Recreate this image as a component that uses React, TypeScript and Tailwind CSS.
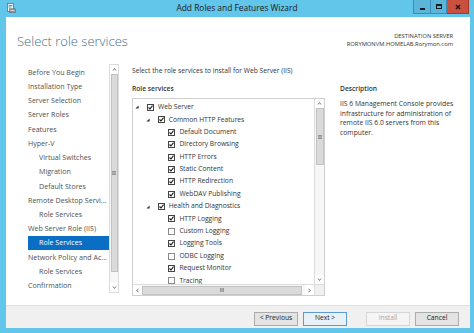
import React from "react";

type Row = { l: number; t: string; c: boolean; e?: boolean };

const tree: Row[] = [
  { l: 0, t: "Web Server", c: true, e: true },
  { l: 1, t: "Common HTTP Features", c: true, e: true },
  { l: 2, t: "Default Document", c: true },
  { l: 2, t: "Directory Browsing", c: true },
  { l: 2, t: "HTTP Errors", c: true },
  { l: 2, t: "Static Content", c: true },
  { l: 2, t: "HTTP Redirection", c: true },
  { l: 2, t: "WebDAV Publishing", c: true },
  { l: 1, t: "Health and Diagnostics", c: true, e: true },
  { l: 2, t: "HTTP Logging", c: true },
  { l: 2, t: "Custom Logging", c: false },
  { l: 2, t: "Logging Tools", c: true },
  { l: 2, t: "ODBC Logging", c: false },
  { l: 2, t: "Request Monitor", c: true },
  { l: 2, t: "Tracing", c: false },
];

const nav: { t: string; l: number; a?: boolean }[] = [
  { t: "Before You Begin", l: 0 },
  { t: "Installation Type", l: 0 },
  { t: "Server Selection", l: 0 },
  { t: "Server Roles", l: 0 },
  { t: "Features", l: 0 },
  { t: "Hyper-V", l: 0 },
  { t: "Virtual Switches", l: 1 },
  { t: "Migration", l: 1 },
  { t: "Default Stores", l: 1 },
  { t: "Remote Desktop Servi...", l: 0 },
  { t: "Role Services", l: 1 },
  { t: "Web Server Role (IIS)", l: 0 },
  { t: "Role Services", l: 1, a: true },
  { t: "Network Policy and Ac...", l: 0 },
  { t: "Role Services", l: 1 },
  { t: "Confirmation", l: 0 },
];

function Check({ checked }: { checked: boolean }) {
  return (
    <span
      className={`w-[7px] h-[7px] shrink-0 border bg-white flex items-center justify-center ${
        checked ? "border-[#444]" : "border-[#8a8a8a]"
      }`}
    >
      {checked && (
        <svg width="5" height="5" viewBox="0 0 5 5">
          <path d="M0.5 2.5 L2 4 L4.5 0.7" fill="none" stroke="#1a1a1a" strokeWidth="1.1" />
        </svg>
      )}
    </span>
  );
}

function Chevron({ dir }: { dir: "up" | "down" | "left" | "right" }) {
  const d =
    dir === "up"
      ? "M1 3.5 L2.5 1.5 L4 3.5"
      : dir === "down"
      ? "M1 1.5 L2.5 3.5 L4 1.5"
      : dir === "left"
      ? "M3.5 1 L1.5 2.5 L3.5 4"
      : "M1.5 1 L3.5 2.5 L1.5 4";
  return (
    <svg width="5" height="5" viewBox="0 0 5 5">
      <path d={d} fill="none" stroke="#707070" strokeWidth="0.9" />
    </svg>
  );
}

function Grip({ horizontal }: { horizontal?: boolean }) {
  return (
    <svg width="4" height="4" viewBox="0 0 4 4">
      {horizontal ? (
        <>
          <rect x="0.3" y="0" width="0.8" height="4" fill="#7a7a7a" />
          <rect x="1.6" y="0" width="0.8" height="4" fill="#7a7a7a" />
          <rect x="2.9" y="0" width="0.8" height="4" fill="#7a7a7a" />
        </>
      ) : (
        <>
          <rect x="0" y="0.3" width="4" height="0.8" fill="#7a7a7a" />
          <rect x="0" y="1.6" width="4" height="0.8" fill="#7a7a7a" />
          <rect x="0" y="2.9" width="4" height="0.8" fill="#7a7a7a" />
        </>
      )}
    </svg>
  );
}

function Btn({ label, kind }: { label: string; kind?: "default" | "disabled" }) {
  const cls =
    kind === "default"
      ? "border-[#5b9bd5] bg-[#e8f0f8] text-[#222]"
      : kind === "disabled"
      ? "border-[#d6d6d6] bg-[#f4f4f4] text-[#a6a6a6]"
      : "border-[#acacac] bg-[#e3e3e3] text-[#222]";
  return (
    <div className={`w-[44px] h-[13.5px] border flex items-center justify-center text-[6.7px] leading-none ${cls}`}>
      {label}
    </div>
  );
}

export default function App() {
  return (
    <div className="w-[474px] h-[333px] bg-[#62c5ea] flex flex-col overflow-hidden font-['Open_Sans',sans-serif] text-[#333]">
      {/* Title bar */}
      <div className="h-[17px] shrink-0 flex items-start">
        <div className="w-[61px] pl-[7px] pt-[3px]">
          <svg width="9" height="10" viewBox="0 0 9 10">
            <rect x="0.5" y="0.5" width="6" height="8" fill="#f4f8fb" stroke="#3a7fb0" strokeWidth="0.8" />
            <rect x="1.5" y="2" width="4" height="0.8" fill="#3a7fb0" />
            <rect x="1.5" y="3.6" width="3" height="0.8" fill="#3a7fb0" />
            <rect x="2.5" y="5.8" width="6" height="3.7" fill="#8e9aa3" stroke="#5c6770" strokeWidth="0.6" />
            <rect x="3.5" y="7" width="4" height="0.8" fill="#d9dee2" />
          </svg>
        </div>
        <div className="flex-1 h-[17px] flex items-center justify-center text-[8.4px] text-[#1a1a1a]">
          Add Roles and Features Wizard
        </div>
        <div className="w-[61px] flex justify-end pr-[5px]">
          <div className="w-[18px] h-[14px] bg-[#59b6da] border border-t-0 border-[#3c8db5] flex items-end justify-center pb-[3px]">
            <div className="w-[5px] h-[2px] bg-[#1a1a1a]" />
          </div>
          <div className="w-[16px] h-[14px] bg-[#59b6da] border border-t-0 border-l-0 border-[#3c8db5] flex items-center justify-center">
            <div className="w-[6px] h-[5px] border border-t-2 border-[#1a1a1a]" />
          </div>
          <div className="w-[22px] h-[14px] bg-[#c9503f] border border-t-0 border-l-0 border-[#a23a2c] flex items-center justify-center">
            <svg width="6" height="6" viewBox="0 0 6 6">
              <path d="M1 1 L5 5 M5 1 L1 5" stroke="#2a1010" strokeWidth="1.4" />
            </svg>
          </div>
        </div>
      </div>

      {/* Client */}
      <div className="flex-1 ml-[6px] mr-[4px] mb-[5px] bg-white flex flex-col">
        {/* Header */}
        <div className="h-[45px] shrink-0 flex justify-between">
          <div className="pl-[11px] pt-[16px] text-[13px] leading-[16px] font-light text-[#4a6e86]">
            Select role services
          </div>
          <div className="pr-[17px] pt-[15px] text-[5.8px] leading-[8px] text-[#333] text-right">
            <div>DESTINATION SERVER</div>
            <div>RORYMONVM.HOMELAB.Rorymon.com</div>
          </div>
        </div>

        {/* Body */}
        <div className="h-[243px] shrink-0 flex">
          {/* Nav */}
          <div className="pl-[22px] pt-[2px] flex items-start">
            <div className="w-[81px] pt-[1.2px]">
              {nav.map((n, i) => (
                <div
                  key={i}
                  className={`h-[14.23px] flex items-center text-[7.1px] leading-none whitespace-nowrap ${
                    n.a ? "bg-[#0a6ec4] text-white" : "text-[#505050]"
                  } ${n.l === 1 ? "pl-[11px]" : "pl-0"}`}
                >
                  {n.t}
                </div>
              ))}
            </div>
            <div className="w-[10px] h-[229px] border border-[#dcdcdc] bg-[#f7f7f7] flex flex-col">
              <div className="h-[9px] shrink-0 bg-white flex items-center justify-center">
                <Chevron dir="up" />
              </div>
              <div className="h-[198px] shrink-0 mx-[0.5px] bg-[#dadada] border border-[#c2c2c2] flex items-center justify-center">
                <Grip />
              </div>
              <div className="flex-1" />
              <div className="h-[9px] shrink-0 bg-white flex items-center justify-center">
                <Chevron dir="down" />
              </div>
            </div>
          </div>

          {/* Main */}
          <div className="ml-[13px] flex-1 flex flex-col">
            <div className="mt-[4px] text-[6.7px] leading-[9px] text-[#333] whitespace-nowrap">
              Select the role services to install for Web Server (IIS)
            </div>
            <div className="mt-[9px] flex">
              <div className="w-[193px] flex flex-col">
                <div className="text-[6.7px] leading-[9px] font-semibold text-[#333]">Role services</div>
                <div className="mt-[5.2px] h-[198px] border border-[#cfcfcf] grid grid-cols-[1fr_10px] grid-rows-[1fr_11px]">
                  <div className="overflow-hidden pt-[2.1px]">
                    {tree.map((r, i) => (
                      <div
                        key={i}
                        className={`h-[12.4px] flex items-center whitespace-nowrap ${
                          r.l === 0 ? "pl-[2px]" : r.l === 1 ? "pl-[12.7px]" : "pl-[23.4px]"
                        }`}
                      >
                        <span className="w-[12px] shrink-0 flex items-center">
                          {r.e && (
                            <svg width="4" height="4" viewBox="0 0 4 4">
                              <path d="M3.6 0.4 L3.6 3.6 L0.4 3.6 Z" fill="#333" />
                            </svg>
                          )}
                        </span>
                        <Check checked={r.c} />
                        <span className="ml-[4px] text-[6.7px] leading-none text-[#333]">{r.t}</span>
                      </div>
                    ))}
                  </div>
                  <div className="border-l border-[#dcdcdc] bg-[#f7f7f7] flex flex-col">
                    <div className="h-[9px] shrink-0 bg-white flex items-center justify-center">
                      <Chevron dir="up" />
                    </div>
                    <div className="h-[57px] shrink-0 mx-[0.5px] bg-[#dadada] border border-[#c2c2c2] flex items-center justify-center">
                      <Grip />
                    </div>
                    <div className="flex-1" />
                    <div className="h-[9px] shrink-0 bg-white flex items-center justify-center">
                      <Chevron dir="down" />
                    </div>
                  </div>
                  <div className="border-t border-[#dcdcdc] bg-[#f7f7f7] flex">
                    <div className="w-[9px] shrink-0 bg-white flex items-center justify-center">
                      <Chevron dir="left" />
                    </div>
                    <div className="w-[160px] shrink-0 my-[0.5px] bg-[#dadada] border border-[#c2c2c2] flex items-center justify-center">
                      <Grip horizontal />
                    </div>
                    <div className="flex-1" />
                    <div className="w-[9px] shrink-0 bg-white flex items-center justify-center">
                      <Chevron dir="right" />
                    </div>
                  </div>
                  <div className="border-t border-l border-[#dcdcdc] bg-[#f0f0f0]" />
                </div>
              </div>
              <div className="ml-[15px] flex flex-col">
                <div className="text-[6.7px] leading-[9px] font-semibold text-[#333]">Description</div>
                <div className="mt-[6px] text-[6.8px] leading-[9.7px] text-[#333] whitespace-nowrap">
                  <div>IIS 6 Management Console provides</div>
                  <div>infrastructure for administration of</div>
                  <div>remote IIS 6.0 servers from this</div>
                  <div>computer.</div>
                </div>
              </div>
            </div>
          </div>
        </div>

        {/* Footer */}
        <div className="flex-1 bg-[#f0f0f0] border-t border-[#dfdfdf] flex justify-end items-start pr-[11px] pt-[6px]">
          <Btn label="< Previous" />
          <div className="w-[5px]" />
          <Btn label="Next >" kind="default" />
          <div className="w-[19px]" />
          <Btn label="Install" kind="disabled" />
          <div className="w-[5px]" />
          <Btn label="Cancel" />
        </div>
      </div>
    </div>
  );
}
